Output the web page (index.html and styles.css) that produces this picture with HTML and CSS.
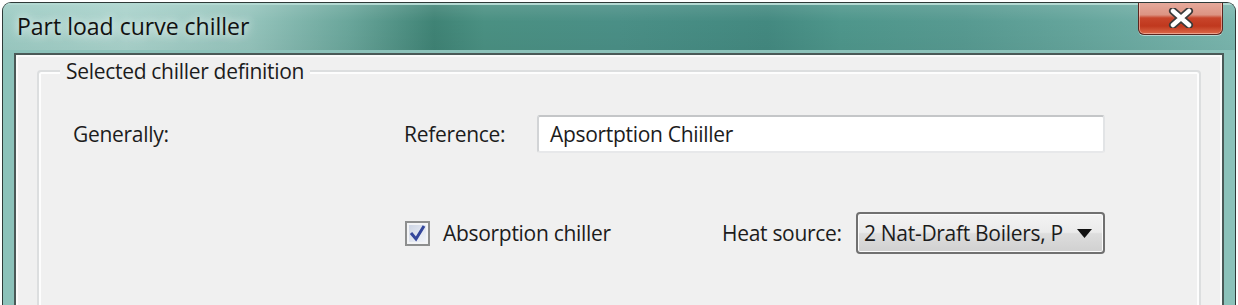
FILE: index.html
```html
<!DOCTYPE html>
<html>
<head>
  <meta charset="utf-8">
  <title>Part load curve chiller</title>
  <link rel="stylesheet" href="styles.css">
</head>
<body>

  <div class="window">
    <div class="titlebar">
      <span class="title">Part load curve chiller</span>
      <button class="close" title="Close">
        <svg width="28" height="20" viewBox="0 0 28 20">
          <path d="M6 3 L22 17 M22 3 L6 17" stroke="#3b3b3b" stroke-width="8" stroke-linecap="round"/>
          <path d="M6 3 L22 17 M22 3 L6 17" stroke="#ffffff" stroke-width="4.5" stroke-linecap="round"/>
        </svg>
      </button>
    </div>

    <div class="frame">
      <div class="client">
        <fieldset class="group">
          <legend>Selected chiller definition</legend>

          <div class="row row-ref">
            <span class="head">Generally:</span>
            <label class="lbl lbl-ref">Reference:</label>
            <div class="textbox">Apsortption Chiiller</div>
          </div>

          <div class="row row-abs">
            <span class="head"></span>
            <label class="check">
              <span class="box">
                <svg width="21" height="21" viewBox="0 0 21 21">
                  <path d="M4 10 L9 16 L17 3" fill="none" stroke="#34479c" stroke-width="3"/>
                </svg>
              </span>
              Absorption chiller
            </label>
            <span class="lbl lbl-heat">Heat source:</span>
            <div class="combo">
              <span>2 Nat-Draft Boilers, P</span>
              <svg width="15" height="9" viewBox="0 0 15 9"><path d="M0 0 H15 L7.5 9 Z" fill="#111"/></svg>
            </div>
          </div>

        </fieldset>
      </div>
    </div>
  </div>

</body>
</html>
```

FILE: styles.css
```css
html, body {
  margin: 0;
  padding: 0;
  background: #fff;
  overflow: hidden;
  font-family: "Open Sans", "DejaVu Sans", sans-serif;
  font-size: 21px;
  letter-spacing: -0.3px;
  color: #1c1c1c;
}

.window {
  box-sizing: border-box;
  width: 1234px;
  height: 303px;
  margin: 2px 0 0 2px;
  border: 1px solid #2e3a38;
  border-bottom: none;
  border-radius: 9px 9px 0 0;
  background: #8cc2ba;
  overflow: hidden;
}

.titlebar {
  height: 47px;
  display: flex;
  justify-content: space-between;
  align-items: flex-start;
  padding-left: 14px;
  box-shadow: inset 0 2px 0 #b3d9d2;
  background:
    linear-gradient(to bottom, rgba(255,255,255,0.12), rgba(255,255,255,0) 40%, rgba(0,0,0,0.03)),
    linear-gradient(to right, #9ccbc3 0, #a9d2cb 10%, #95c4bc 20%, #6aa69b 28%, #3f8375 35%, #4a9082 39%, #4a8f86 50%, #438980 62%, #4e968b 68%, #579a91 78%, #66a69d 88%, #7ab6ae 100%);
}

.title {
  margin-top: 9px;
  font-size: 23px;
  letter-spacing: 0;
  line-height: 28px;
  color: #111;
  text-shadow: 0 0 8px rgba(255,255,255,0.9), 0 0 16px rgba(255,255,255,0.6);
}

.close {
  width: 85px;
  height: 33px;
  margin: -1px 12px 0 0;
  padding: 0;
  border: 1px solid #5b2620;
  border-top: none;
  border-radius: 0 0 6px 6px;
  display: flex;
  align-items: center;
  justify-content: center;
  background: linear-gradient(to bottom, #e7ab9d 0, #dc9483 40%, #c8452b 50%, #c0381e 75%, #dc6a4a 100%);
  box-shadow: inset 0 0 0 1px rgba(255,220,210,0.5), 0 1px 0 rgba(255,255,255,0.5);
}

.frame {
  padding: 3px 11px 0 11px;
}

.client {
  height: 260px;
  padding: 4px 21px 0 21px;
  border: 2px solid #4a5957;
  border-bottom: none;
  background: #f0f0f0;
  box-shadow: inset 0 0 0 2px #fbfbfb;
}

.group {
  margin: 0;
  height: 240px;
  padding: 32px 20px 0 34px;
  border: 2px solid #dcdedf;
  border-radius: 4px;
  box-shadow: inset 0 0 0 2px #fdfdfd;
}

.group legend {
  margin-left: -13px;
  padding: 0 6px;
  line-height: 24px;
  background: #f0f0f0;
}

.row {
  display: flex;
  align-items: center;
  white-space: nowrap;
}

.row-ref {
  height: 38px;
}

.row-abs {
  height: 42px;
  margin-top: 59px;
}

.head {
  width: 331px;
  flex: none;
}

.lbl-ref {
  width: 133px;
}

.textbox {
  box-sizing: border-box;
  width: 568px;
  height: 38px;
  padding-left: 11px;
  line-height: 34px;
  background: #fff;
  border: 2px solid;
  border-color: #c4c6c8 #e2e4e6 #e7e8ea #d2d4d6;
  border-radius: 3px;
}

.check {
  width: 318px;
  display: flex;
  align-items: center;
}

.check .box {
  box-sizing: border-box;
  width: 25px;
  height: 25px;
  margin: 0 13px 0 1px;
  border: 2px solid #8e8f8f;
  background: linear-gradient(135deg, #c9d1e2, #e9edf5 70%, #f4f6fa);
  box-shadow: inset 0 0 0 2px #f3f4f6;
  display: flex;
}

.lbl-heat {
  width: 134px;
}

.combo {
  box-sizing: border-box;
  width: 249px;
  height: 42px;
  padding: 0 11px 0 6px;
  display: flex;
  align-items: center;
  justify-content: space-between;
  border: 2px solid #707070;
  border-radius: 4px;
  background: linear-gradient(to bottom, #f3f3f3 0, #ebebeb 48%, #dddddd 52%, #d0d0d0 100%);
  box-shadow: inset 0 0 0 1px #fbfbfb;
}
```
